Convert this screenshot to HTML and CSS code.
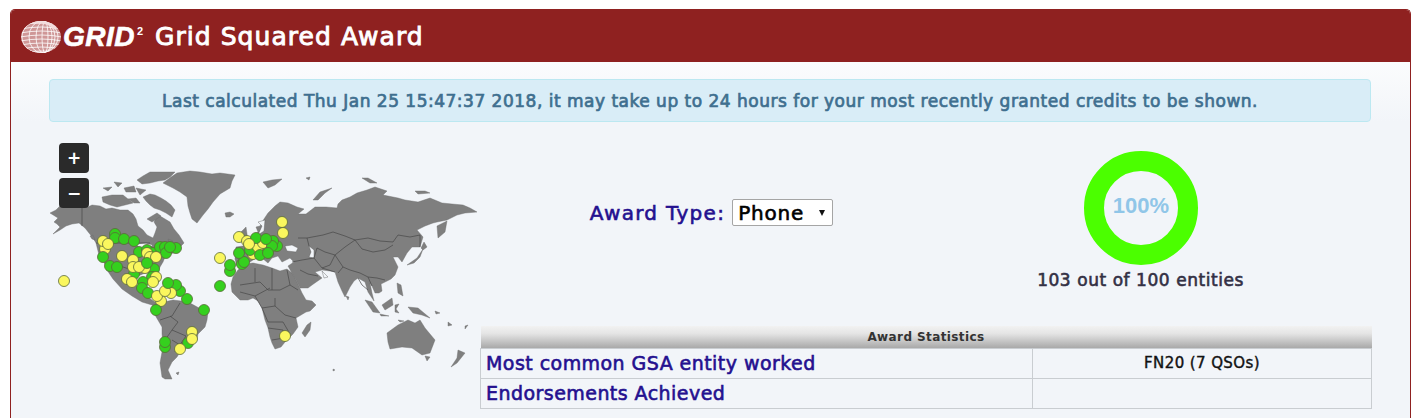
FILE: index.html
```html
<!DOCTYPE html>
<html lang="en">
<head>
<meta charset="utf-8">
<title>Grid Squared Award</title>
<link rel="stylesheet" href="styles.css">
</head>
<body>
<main class="panel">
  <header class="panel-head">
    <div class="logo">
      <svg class="globe" viewBox="0 0 42 34" aria-hidden="true">
        <defs><clipPath id="gc"><ellipse cx="21" cy="17" rx="20" ry="16"/></clipPath></defs>
        <ellipse cx="21" cy="17" rx="20" ry="16" fill="#cf9797"/>
        <g clip-path="url(#gc)" fill="none" stroke="#fff" stroke-width=".8">
          <ellipse cx="25" cy="17" rx="3" ry="16"/>
          <ellipse cx="24" cy="17" rx="8" ry="16"/>
          <ellipse cx="22" cy="17" rx="13" ry="16"/>
          <ellipse cx="20" cy="17" rx="18" ry="16"/>
          <path d="M0 5Q22 1 42 5M0 9Q22 5 42 9M0 13Q22 9 42 13M0 17Q22 13 42 17M0 21Q22 17 42 21M0 25Q22 21 42 25M0 29Q22 25 42 29M0 33Q22 29 42 33"/>
          <path d="M12 2Q26 -1 36 8" stroke-width="4" stroke="#f3dcdc"/>
        </g>
      </svg>
      <span class="logo-word">GRID</span><sup class="logo-sup">2</sup>
    </div>
    <h1 class="panel-title">Grid Squared Award</h1>
  </header>
  <div class="panel-body">
    <p class="notice">Last calculated Thu Jan 25 15:47:37 2018, it may take up to 24 hours for your most recently granted credits to be shown.</p>
    <div class="content">
      <section class="map-wrap">
        <div class="zoom-ctl">
          <button class="zoom-btn" type="button">+</button>
          <button class="zoom-btn" type="button">−</button>
        </div>
        <svg class="map" viewBox="49 130 431 255" aria-label="World map">
          <g class="land">
            <path d="M50 213L56 210 60 206 67 205 73 205 82 208 88 207 92 205 100 206 106 209 112 208 120 210 128 210 133 214 136 219 138 226 143 230 147 235 153 238 155 233 157 227 154 222 156 218 160 216 165 219 170 222 174 229 179 235 184 243 181 246 176 244 172 249 177 252 170 254 165 257 163 262 160 267 158 272 160 281 157 281 153 273 145 273 138 276 135 283 140 290 147 287 150 291 146 296 155 302 160 305 165 309 160 310 152 305 142 302 132 296 122 289 113 279 107 270 104 262 99 255 96 243 93 238 89 233 85 228 79 223 72 224 66 226 60 230 53 234 60 227 57 224 54 222 58 218Z"/>
            <path d="M155 307L164 302 173 300 181 301 190 303 199 308 208 312 207 320 205 327 198 334 197 340 190 344 187 347 180 352 177 357 172 362 168 370 172 379 165 379 162 377 160 363 162 352 163 343 162 334 162 327 155 315Z"/>
            <path d="M163 183L171 177 177 173 190 171 200 172 212 174 220 173 235 175 232 181 230 188 220 194 213 202 208 209 203 215 197 223 192 219 190 213 188 206 187 197 180 192 173 188Z"/>
            <path d="M225 213L230 212 234 214 230 217 226 217Z"/>
            <path d="M137 180L143 176 150 172 162 172 175 172 170 177 165 180 158 181 150 183 142 184Z"/>
            <path d="M143 197L150 194 155 195 161 198 166 201 171 205 175 210 172 217 166 213 160 210 154 208 150 205 146 201Z"/>
            <path d="M102 197L112 195 123 195 128 199 133 203 125 205 117 207 110 205 103 202Z"/>
            <path d="M103 188L112 187 108 191Z"/>
            <path d="M124 188L134 186 136 192 126 192Z"/>
            <path d="M114 182L122 183 118 187Z"/>
            <path d="M136 188L146 190 140 195Z"/>
            <path d="M128 199L136 198 140 203 134 203Z"/>
            <path d="M168 239L173 241 170 246Z"/>
            <path d="M147 219L157 213 161 216 152 222Z"/>
            <path d="M90 236L93 235 95 240 92 239Z"/>
            <path d="M233 277L238 270 245 264 253 263 263 265 272 268 280 271 287 269 292 273 297 282 302 293 306 300 312 301 316 305 310 311 306 312 296 318 298 327 293 334 287 340 285 342 281 347 275 349 272 343 270 337 268 328 265 320 262 308 258 301 253 298 248 300 240 300 232 292 231 284Z"/>
            <path d="M307 325L311 322 310 330 305 337 302 333Z"/>
            <path d="M236 247L243 246 248 243 250 240 252 236 258 232 256 227 260 226 264 219 268 213 275 206 280 202 288 203 297 207 304 209 298 214 306 214 315 207 326 207 337 208 338 204 342 200 350 197 357 193 367 190 375 187 387 191 383 195 398 198 405 200 418 202 430 198 442 203 452 204 463 205 470 208 477 212 465 213 457 215 447 220 437 222 433 223 425 226 417 230 423 237 420 247 412 247 407 253 402 262 398 257 393 257 398 267 395 275 391 279 385 282 381 284 382 291 379 293 375 293 372 286 370 283 372 293 374 301 368 292 365 282 358 278 354 281 350 287 345 297 342 291 338 282 335 272 330 271 322 270 315 272 322 278 312 285 308 288 300 288 296 280 293 275 288 266 294 262 290 258 282 262 278 256 272 258 268 263 262 258 256 258 250 262 243 266 237 266 235 259Z"/>
            <path d="M241 232L246 227 247 234 248 240 242 242Z"/>
            <path d="M234 235L238 233 238 238 235 238Z"/>
            <path d="M263 182L272 180 282 179 275 185 268 188Z"/>
            <path d="M306 178L310 177 309 180Z"/>
            <path d="M313 200L320 192 332 188 325 193 318 200Z"/>
            <path d="M362 178L368 178 377 183 370 183Z"/>
            <path d="M415 191L425 191 430 193 418 194Z"/>
            <path d="M437 226L447 221 445 232 438 238Z"/>
            <path d="M407 265L417 258 423 249 420 257 414 263Z"/>
            <path d="M421 248L424 242 427 247 423 250Z"/>
            <path d="M397 283L401 285 403 296 398 293Z"/>
            <path d="M365 300L372 302 380 313 373 312Z"/>
            <path d="M380 314L389 316 381 316Z"/>
            <path d="M382 305L392 298 393 305 385 310Z"/>
            <path d="M395 305L399 304 396 309 399 313 395 312Z"/>
            <path d="M408 307L418 308 430 318 422 315 413 313Z"/>
            <path d="M346 296L349 297 348 300Z"/>
            <path d="M387 333L398 325 408 320 415 323 420 320 425 328 435 340 430 353 422 355 412 348 402 347 390 349 388 342Z"/>
            <path d="M425 356L430 357 427 361Z"/>
            <path d="M458 350L465 353 457 363 451 367 457 358Z"/>
            <path d="M398 320L404 321 400 322Z"/>
            <path d="M435 311L440 313 436 314Z"/>
            <path d="M448 322L452 325 448 326Z"/>
            <path d="M465 326L468 325 465 329Z"/>
            <path d="M333 369L335 370 333 371Z"/>
            <path d="M176 373L179 372 178 375Z"/>
          </g>
          <g class="water">
            <path d="M285 246L292 245 298 248 296 252 287 251Z"/>
            <path d="M309 246L314 250 314 258 309 257 311 252Z"/>
            <path d="M258 222L265 220 264 231 258 235 262 226Z"/>
            <path d="M135 244L146 243 153 245 148 249 140 248Z"/>
            <path d="M322 271L328 277 324 278Z"/>
          </g>
          <g class="borders">
            <path d="M82 208L82 226M96 243L150 243M106 270L120 266 135 271"/>
            <path d="M163 343L172 330 186 336 175 352M170 316L178 322 172 330M160 320L172 316 180 303M172 340L180 345"/>
            <path d="M298 238L307 238 323 235 333 232 345 236 355 240 368 238 380 241 393 242 398 235 410 237 420 235 420 247M355 240L362 249 373 252 385 250 393 245M317 248L325 252 335 255 345 247 355 240M335 255L343 267 350 270 360 273 368 277 377 278 385 280M307 238L309 246M317 248L314 258 322 268 335 272M314 258L302 260 292 262M322 268L330 265 335 255M343 267L338 273M358 278L362 285 368 290M368 277L372 286M300 270L308 274 318 276"/>
            <path d="M240 285L260 282 268 290 280 290 290 285 298 290M255 268L255 282M272 268L272 290M287 270L290 285M240 292L255 296 262 308 275 306 285 315 296 318M262 308L268 322 283 322 290 334M268 328L283 330 285 342M272 340L284 338M275 298L275 306M255 296L270 288"/>
          </g>
          <g class="dots">
            <circle class="gr" cx="115" cy="234" r="5.5"/><circle class="gr" cx="115" cy="238" r="5.5"/><circle class="gr" cx="124" cy="239" r="5.5"/><circle class="gr" cx="134" cy="241" r="5.5"/>
            <circle class="ye" cx="105" cy="249" r="5.5"/><circle class="ye" cx="103" cy="241" r="5.5"/><circle class="ye" cx="108" cy="244" r="5.5"/><circle class="gr" cx="110" cy="266" r="5.5"/><circle class="gr" cx="103" cy="257" r="5.5"/><circle class="gr" cx="117" cy="267" r="5.5"/>
            <circle class="gr" cx="139" cy="252" r="5.5"/><circle class="gr" cx="147" cy="250" r="5.5"/><circle class="gr" cx="153" cy="253" r="5.5"/><circle class="gr" cx="160" cy="247" r="5.5"/><circle class="gr" cx="165" cy="247" r="5.5"/><circle class="gr" cx="176" cy="248" r="5.5"/><circle class="gr" cx="166" cy="253" r="5.5"/><circle class="gr" cx="170" cy="247" r="5.5"/>
            <circle class="ye" cx="122" cy="256" r="5.5"/><circle class="gr" cx="134" cy="274" r="5.5"/><circle class="gr" cx="154" cy="269" r="5.5"/><circle class="ye" cx="133" cy="260" r="5.5"/><circle class="ye" cx="133" cy="267" r="5.5"/><circle class="ye" cx="145" cy="268" r="5.5"/><circle class="ye" cx="139" cy="267" r="5.5"/><circle class="ye" cx="147" cy="253" r="5.5"/><circle class="ye" cx="150" cy="257" r="5.5"/><circle class="ye" cx="156" cy="257" r="5.5"/><circle class="gr" cx="147" cy="263" r="5.5"/>
            <circle class="ye" cx="127" cy="279" r="5.5"/><circle class="ye" cx="132" cy="282" r="5.5"/>
            <circle class="gr" cx="152" cy="277" r="5.5"/><circle class="gr" cx="187" cy="299" r="5.5"/><circle class="gr" cx="180" cy="291" r="5.5"/><circle class="gr" cx="176" cy="285" r="5.5"/><circle class="gr" cx="143" cy="282" r="5.5"/><circle class="ye" cx="161" cy="301" r="5.5"/><circle class="ye" cx="156" cy="277" r="5.5"/><circle class="ye" cx="153" cy="282" r="5.5"/><circle class="gr" cx="142" cy="288" r="5.5"/><circle class="gr" cx="148" cy="293" r="5.5"/><circle class="ye" cx="157" cy="296" r="5.5"/><circle class="ye" cx="171" cy="293" r="5.5"/><circle class="ye" cx="165" cy="291" r="5.5"/><circle class="gr" cx="168" cy="283" r="5.5"/>
            <circle class="gr" cx="156" cy="310" r="5.5"/><circle class="gr" cx="204" cy="310" r="5.5"/>
            <circle class="ye" cx="64" cy="281" r="5.5"/>
            <circle class="gr" cx="165" cy="347" r="5.5"/><circle class="gr" cx="165" cy="342" r="5.5"/><circle class="gr" cx="188" cy="343" r="5.5"/><circle class="ye" cx="192" cy="332" r="5.5"/><circle class="ye" cx="192" cy="339" r="5.5"/><circle class="ye" cx="180" cy="349" r="5.5"/>
            <circle class="ye" cx="285" cy="336" r="5.5"/>
            <circle class="gr" cx="220" cy="286" r="5.5"/><circle class="ye" cx="220" cy="258" r="5.5"/><circle class="gr" cx="230" cy="271" r="5.5"/><circle class="gr" cx="230" cy="265" r="5.5"/><circle class="gr" cx="242" cy="264" r="5.5"/><circle class="gr" cx="244" cy="262" r="5.5"/><circle class="gr" cx="239" cy="253" r="5.5"/>
            <circle class="ye" cx="239" cy="237" r="5.5"/><circle class="ye" cx="247" cy="241" r="5.5"/><circle class="ye" cx="253" cy="254" r="5.5"/><circle class="gr" cx="250" cy="250" r="5.5"/><circle class="ye" cx="258" cy="247" r="5.5"/><circle class="ye" cx="263" cy="243" r="5.5"/><circle class="gr" cx="256" cy="238" r="5.5"/><circle class="ye" cx="249" cy="244" r="5.5"/><circle class="gr" cx="277" cy="246" r="5.5"/><circle class="gr" cx="273" cy="241" r="5.5"/><circle class="gr" cx="272" cy="246" r="5.5"/><circle class="gr" cx="266" cy="239" r="5.5"/><circle class="gr" cx="260" cy="255" r="5.5"/><circle class="gr" cx="268" cy="253" r="5.5"/>
            <circle class="ye" cx="282" cy="222" r="5.5"/><circle class="ye" cx="283" cy="233" r="5.5"/>
          </g>
        </svg>
      </section>
      <section class="side">
        <div class="summary">
          <div class="award-type">
            <label class="award-label" for="atype">Award Type:</label>
            <div class="select-box">
              <select class="award-select" id="atype"><option>Phone</option></select>
            </div>
          </div>
          <div class="progress">
            <svg class="donut" viewBox="0 0 114 114" aria-label="100%">
              <circle class="donut-ring" cx="57" cy="57" r="47"/>
              <text class="donut-text" x="57" y="62" text-anchor="middle">100%</text>
            </svg>
            <p class="progress-text">103 out of 100 entities</p>
          </div>
        </div>
        <table class="stats">
          <colgroup><col class="col-name"><col></colgroup>
          <thead><tr><th colspan="2">Award Statistics</th></tr></thead>
          <tbody>
            <tr><td class="stat-name">Most common GSA entity worked</td><td class="stat-value">FN20 (7 QSOs)</td></tr>
            <tr><td class="stat-name">Endorsements Achieved</td><td class="stat-value"></td></tr>
          </tbody>
        </table>
      </section>
    </div>
  </div>
</main>
</body>
</html>
```
FILE: styles.css
```css
* { box-sizing: border-box; }
html, body { height: 418px; overflow: hidden; }
body {
  margin: 0;
  padding: 9px 11px 0 10px;
  background: #fff;
  font-family: "DejaVu Sans", sans-serif;
}
.panel {
  height: 409px;
  border: 1px solid #8f2120;
  border-bottom: 0;
  border-radius: 5px 5px 0 0;
  background: #f2f5f9;
  overflow: hidden;
}
.panel-head {
  height: 52px;
  background: #8f2120;
  display: flex;
  align-items: center;
  color: #fff;
  padding: 1px 0 0 9px;
}
.logo { display: flex; align-items: center; width: 135px; }
.globe { width: 42px; height: 34px; flex: none; }
.logo-word {
  font-family: "Liberation Sans", sans-serif;
  font-weight: 700;
  font-style: italic;
  font-size: 28px;
  letter-spacing: .5px;
  margin-left: 1px;
  -webkit-text-stroke: .6px #fff;
}
.logo-sup {
  font-family: "Liberation Sans", sans-serif;
  font-weight: 700;
  font-size: 11px;
  align-self: flex-start;
  margin: 5px 0 0 2px;
}
.panel-title {
  margin: 0;
  font-size: 25px;
  font-weight: 400;
  -webkit-text-stroke: .9px #fff;
  letter-spacing: 1.05px;
}
.panel-body {
  padding: 17px 39px 0 38px;
  background: linear-gradient(#fbfcfd, #f2f5f9 60px);
}
.notice {
  margin: 0;
  height: 43px;
  line-height: 42px;
  text-align: center;
  background: #d9edf7;
  border: 1px solid #bce8f1;
  border-radius: 4px;
  color: #3f6f8f;
  font-size: 17px;
  letter-spacing: .5px;
  -webkit-text-stroke: .7px #3f6f8f;
}
.content { display: flex; margin-top: 8px; }
.map-wrap { position: relative; width: 431px; flex: none; height: 255px; }
.map { display: block; width: 431px; height: 255px; }
.zoom-ctl {
  position: absolute;
  left: 10px;
  top: 13px;
  display: flex;
  flex-direction: column;
  gap: 5px;
}
.zoom-btn {
  width: 30px;
  height: 30px;
  padding: 0;
  border: 0;
  border-radius: 4px;
  background: #2a2a2a;
  color: #fff;
  font-family: "DejaVu Sans", sans-serif;
  font-size: 17px;
  font-weight: 700;
}
.land path { fill: #7f7f7f; stroke: #6a6a6a; stroke-width: .4; stroke-linejoin: round; }
.water path { fill: #f2f5f9; stroke: #555; stroke-width: .4; stroke-linejoin: round; }
.borders path { fill: none; stroke: #484848; stroke-width: .7; stroke-linejoin: round; }
.dots circle { stroke: #5b6a3a; stroke-width: .8; }
.gr { fill: #35d01e; }
.ye { fill: #faf75e; }
.side { flex: 1; min-width: 0; }
.summary { display: flex; height: 196px; padding-top: 21px; }
.award-type {
  width: 463px;
  flex: none;
  display: flex;
  justify-content: center;
  align-items: center;
  gap: 7px;
  height: 82px;
  padding-top: 41px;
}
.award-label {
  font-size: 20px;
  letter-spacing: 1.3px;
  color: #24108f;
  -webkit-text-stroke: .6px #24108f;
  white-space: nowrap;
}
.select-box { position: relative; flex: none; }
.select-box::after {
  content: "";
  position: absolute;
  right: 8px;
  top: 11px;
  border-left: 3.5px solid transparent;
  border-right: 3.5px solid transparent;
  border-top: 6px solid #111;
}
.award-select {
  display: block;
  appearance: none;
  width: 101px;
  height: 27px;
  padding: 0 0 0 5px;
  font-family: "DejaVu Sans", sans-serif;
  font-size: 20px;
  letter-spacing: .8px;
  -webkit-text-stroke: .6px #000;
  color: #000;
  background: #fff;
  border: 1px solid #a5a5a5;
  border-radius: 2px;
}
.progress { width: 395px; display: flex; flex-direction: column; align-items: center; }
.donut { width: 114px; height: 114px; flex: none; }
.donut-ring { fill: none; stroke: #4bff00; stroke-width: 20; }
.donut-text { font-family: "Liberation Sans", sans-serif; font-weight: 700; font-size: 22px; fill: #90c6e8; }
.progress-text {
  margin: 5px 0 0;
  font-size: 17px;
  letter-spacing: .55px;
  color: #333044;
  -webkit-text-stroke: .6px #333044;
  white-space: nowrap;
}
.stats { width: 892px; border-collapse: collapse; table-layout: fixed; }
.col-name { width: 552px; }
.stats th {
  height: 22px;
  padding: 0;
  font-size: 12px;
  font-weight: 700;
  letter-spacing: .4px;
  color: #333;
  background: linear-gradient(#f2f2f2, #e4e4e4 35%, #a9a9a9);
}
.stats td {
  height: 30px;
  padding: 0 5px;
  border: 1px solid #c9cdd1;
}
.stat-name {
  font-size: 19px;
  letter-spacing: .45px;
  color: #24108f;
  -webkit-text-stroke: .6px #24108f;
  white-space: nowrap;
}
.stat-value {
  text-align: center;
  font-size: 15px;
  letter-spacing: .4px;
  color: #111;
  -webkit-text-stroke: .4px #111;
}
```
